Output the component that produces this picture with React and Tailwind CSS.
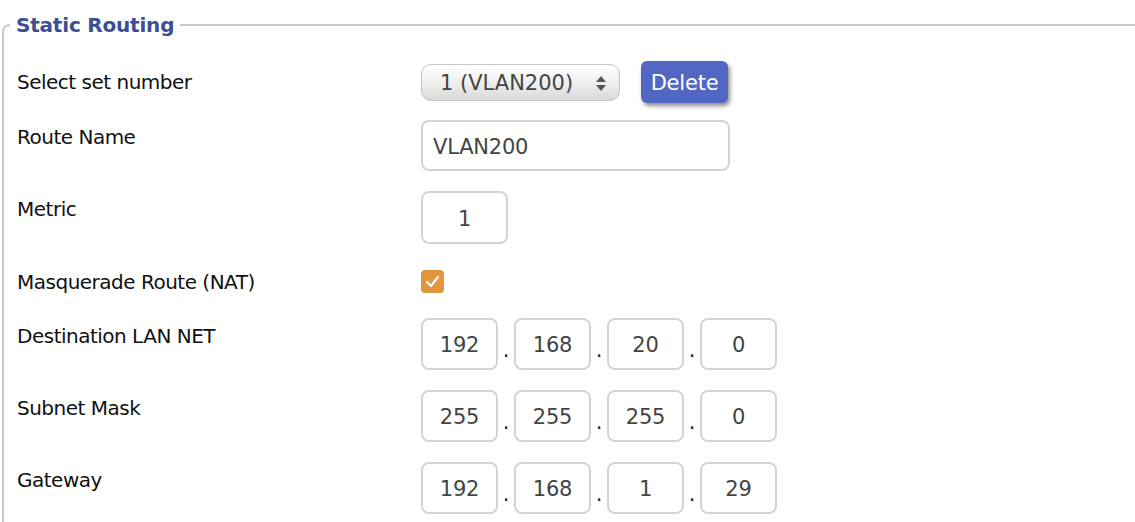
import React from 'react';

const font = { fontFamily: '"DejaVu Sans", Tahoma, Verdana, sans-serif' };

const Label = ({ children, className = '' }) => (
  <div className={`w-[404px] shrink-0 text-[20px] leading-[24px] tracking-[-0.025em] text-[#111] ${className}`}>
    {children}
  </div>
);

const Box = ({ value, className = '' }) => (
  <div
    className={`h-[52px] flex items-center justify-center pt-[4px] rounded-[8px] border-2 border-[#d4d4d4] bg-white text-[21px] tracking-[-0.01em] text-[#444] ${className}`}
  >
    {value}
  </div>
);

const IpRow = ({ label, parts }) => (
  <div className="flex items-start">
    <Label className="pt-[6px]">{label}</Label>
    <div className="flex items-center">
      {parts.map((p, i) => (
        <React.Fragment key={i}>
          {i > 0 && <span className="w-[16px] pt-[14px] text-center text-[21px] text-[#222]">.</span>}
          <Box value={p} className="w-[77px]" />
        </React.Fragment>
      ))}
    </div>
  </div>
);

export default function App() {
  return (
    <div className="w-[1135px] h-[522px] overflow-hidden bg-white" style={font}>
      <fieldset className="mt-[13px] ml-[2px] w-[1200px] min-h-[520px] border-t-2 border-l-2 border-[#c8c8c8] rounded-tl-[8px] pl-[6px]">
        <legend className="px-[6px] text-[20px] leading-[24px] font-bold tracking-[-0.01em] text-[#3b4f92]">
          Static Routing
        </legend>
        <div className="pl-[7px] pt-[24px] flex flex-col">
          {/* set number */}
          <div className="flex items-center">
            <Label>Select set number</Label>
            <div className="flex items-center gap-[21px]">
              <div className="relative w-[199px] h-[37px] rounded-[10px] border border-[#c4c4c4] bg-gradient-to-b from-white via-[#efefef] to-[#d9d9d9] text-[21px] text-[#444] flex items-center pl-[18px] pt-[3px]">
                1 (VLAN200)
                <svg className="absolute right-[12px] top-[10px]" width="12" height="17" viewBox="0 0 12 17">
                  <path d="M6 1 L11 7 H1 Z" fill="#555" />
                  <path d="M6 16 L11 10 H1 Z" fill="#555" />
                </svg>
              </div>
              <button className="w-[87px] h-[42px] pt-[4px] rounded-[6px] bg-[#5267c4] text-white text-[21px] tracking-[-0.01em] shadow-[2px_3px_4px_rgba(0,0,0,0.45)]">
                Delete
              </button>
            </div>
          </div>

          {/* route name */}
          <div className="flex items-start mt-[17px]">
            <Label className="pt-[5px]">Route Name</Label>
            <div className="w-[309px] h-[51px] pt-[4px] rounded-[8px] border-2 border-[#d4d4d4] flex items-center pl-[10px] text-[21px] tracking-[-0.01em] text-[#444]">
              VLAN200
            </div>
          </div>

          {/* metric */}
          <div className="flex items-start mt-[20px]">
            <Label className="pt-[6px]">Metric</Label>
            <Box value="1" className="w-[87px] h-[53px]" />
          </div>

          {/* NAT */}
          <div className="flex items-center mt-[25px]">
            <Label className="pt-[1px]">Masquerade Route (NAT)</Label>
            <div className="w-[23px] h-[23px] rounded-[4px] bg-[#e3953c] flex items-center justify-center">
              <svg width="15" height="13" viewBox="0 0 15 13">
                <path d="M2 7 L6 11 L13 2" stroke="white" strokeWidth="2.2" fill="none" strokeLinecap="round" strokeLinejoin="round" />
              </svg>
            </div>
          </div>

          <div className="mt-[24px] flex flex-col gap-[20px]">
            <IpRow label="Destination LAN NET" parts={['192', '168', '20', '0']} />
            <IpRow label="Subnet Mask" parts={['255', '255', '255', '0']} />
            <IpRow label="Gateway" parts={['192', '168', '1', '29']} />
          </div>
        </div>
      </fieldset>
    </div>
  );
}
